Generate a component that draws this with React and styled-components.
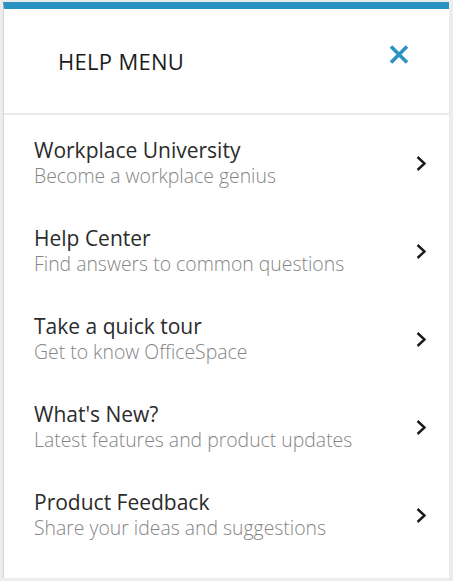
import React from "react";
import styled, { createGlobalStyle } from "styled-components";

const Global = createGlobalStyle`
  html, body { margin: 0; padding: 0; }
  body {
    background: #ececec;
    font-family: "Open Sans", "Noto Sans", sans-serif;
    width: 453px;
    height: 581px;
    overflow: hidden;
  }
`;

const Panel = styled.div`
  box-sizing: border-box;
  margin: 2px 0 0 3px;
  width: 446px;
  height: 576px;
  background: #ffffff;
  border-top: 7px solid #2a93c1;
  border-left: 1px solid #d4d4d4;
  display: flex;
  flex-direction: column;
`;

const Header = styled.div`
  height: 106px;
  flex-shrink: 0;
  box-sizing: border-box;
  display: flex;
  align-items: center;
  justify-content: space-between;
  padding: 0 40px 0 54px;
  border-bottom: 2px solid #e9e9ef;
`;

const HeaderTitle = styled.h2`
  margin: 0;
  font-size: 22px;
  line-height: 30px;
  font-weight: 500;
  letter-spacing: 0.3px;
  color: #1c1c1c;
`;

const CloseButton = styled.button`
  align-self: flex-start;
  margin-top: 35px;
  border: 0;
  background: transparent;
  padding: 0;
  width: 20px;
  height: 20px;
  display: flex;
  align-items: center;
  justify-content: center;
  cursor: pointer;
`;

const List = styled.ul`
  list-style: none;
  margin: 0;
  padding: 0;
`;

const Item = styled.li`
  height: 88px;
  box-sizing: border-box;
  padding: 22px 22px 0 30px;
  display: flex;
  align-items: flex-start;
  justify-content: space-between;
`;

const Texts = styled.div`
  display: flex;
  flex-direction: column;
`;

const Title = styled.div`
  font-size: 21px;
  line-height: 27px;
  color: #2b2b2b;
`;

const Subtitle = styled.div`
  font-size: 19.4px;
  font-weight: 300;
  line-height: 24px;
  color: #858585;
`;

const Chevron = styled.div`
  margin-top: 18px;
  width: 12px;
  height: 17px;
  display: flex;
`;

const items = [
  ["Workplace University", "Become a workplace genius"],
  ["Help Center", "Find answers to common questions"],
  ["Take a quick tour", "Get to know OfficeSpace"],
  ["What's New?", "Latest features and product updates"],
  ["Product Feedback", "Share your ideas and suggestions"],
];

export default function App() {
  return (
    <>
      <Global />
      <Panel>
        <Header>
          <HeaderTitle>HELP MENU</HeaderTitle>
          <CloseButton aria-label="Close">
            <svg width="20" height="19" viewBox="0 0 20 19">
              <path d="M2 1.5 L18 17.5 M18 1.5 L2 17.5" stroke="#2a93c1" strokeWidth="3.6" strokeLinecap="butt" fill="none" />
            </svg>
          </CloseButton>
        </Header>
        <List>
          {items.map(([t, s]) => (
            <Item key={t}>
              <Texts>
                <Title>{t}</Title>
                <Subtitle>{s}</Subtitle>
              </Texts>
              <Chevron>
                <svg width="12" height="17" viewBox="0 0 12 17">
                  <path d="M2.5 2 L9.5 8.5 L2.5 15" stroke="#1a1a1a" strokeWidth="2.4" fill="none" />
                </svg>
              </Chevron>
            </Item>
          ))}
        </List>
      </Panel>
    </>
  );
}
